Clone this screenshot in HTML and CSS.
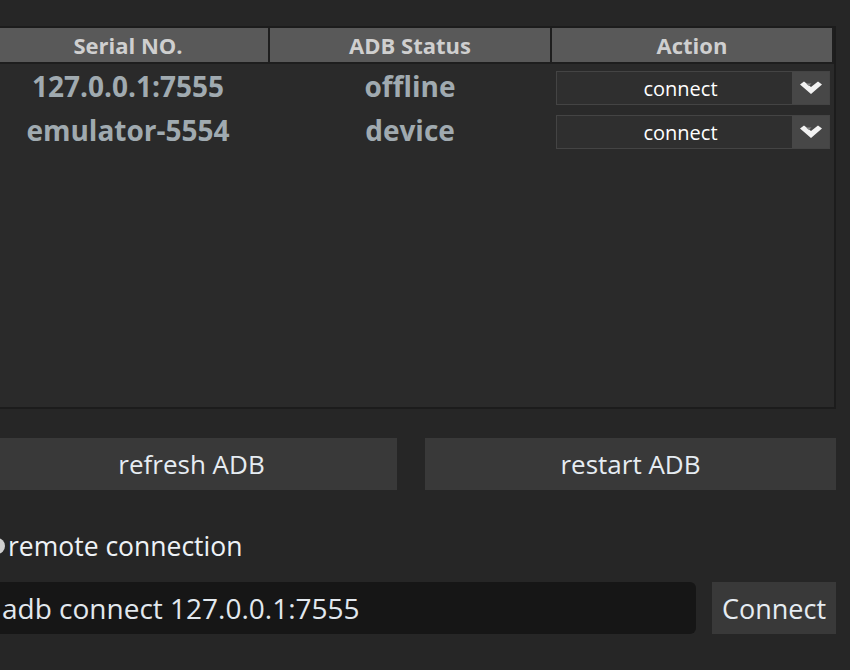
FILE: index.html
```html
<!DOCTYPE html>
<html lang="en">

<head>
    <meta charset="UTF-8">
    <meta name="viewport" content="width=device-width, initial-scale=1.0">
    <title>ADB Devices</title>
    <link rel="stylesheet" href="styles.css">
</head>

<body>
    <div class="adb">
        <div class="device_panel">
            <div class="device_head">
                <div>Serial NO.</div>
                <div>ADB Status</div>
                <div>Action</div>
            </div>
            <div class="device_row">
                <div class="serial">127.0.0.1:7555</div>
                <div class="status">offline</div>
                <div class="action">
                    <div class="combo">
                        <span>connect</span>
                        <i class="combo_arrow">
                            <svg width="24" height="14" viewBox="0 0 24 14">
                                <path d="M1 3.5 L5 0.5 L12 6 L19 0.5 L23 3.5 L12 13 Z" fill="#f2f2f2" />
                                <path d="M7 2.5 L12.5 2.5 L9.8 5 Z" fill="#8a8a8a" />
                            </svg>
                        </i>
                    </div>
                </div>
            </div>
            <div class="device_row">
                <div class="serial">emulator-5554</div>
                <div class="status">device</div>
                <div class="action">
                    <div class="combo">
                        <span>connect</span>
                        <i class="combo_arrow">
                            <svg width="24" height="14" viewBox="0 0 24 14">
                                <path d="M1 3.5 L5 0.5 L12 6 L19 0.5 L23 3.5 L12 13 Z" fill="#f2f2f2" />
                                <path d="M7 2.5 L12.5 2.5 L9.8 5 Z" fill="#8a8a8a" />
                            </svg>
                        </i>
                    </div>
                </div>
            </div>
        </div>

        <div class="adb_buttons">
            <button>refresh ADB</button>
            <button>restart ADB</button>
        </div>

        <label class="remote">
            <span class="radio"></span>
            remote connection
        </label>

        <div class="remote_form">
            <input class="remote_input" type="text" value="adb connect 127.0.0.1:7555">
            <button class="remote_btn">Connect</button>
        </div>
    </div>
</body>

</html>
```

FILE: styles.css
```css
* {
    box-sizing: border-box;
}

body {
    margin: 0;
    background: #262626;
    overflow: hidden;
    font-family: "Open Sans", "Noto Sans", sans-serif;
}

.adb {
    width: 850px;
    margin-left: -14px;
    padding-top: 26px;
}

.device_panel {
    height: 383px;
    background: #2a2a2a;
    border: 2px solid #1c1c1c;
}

.device_head {
    display: grid;
    grid-template-columns: 280px 280px 280px;
    column-gap: 2px;
    height: 36px;
    border-bottom: 2px solid #1e1e1e;
    background: #1e1e1e;
}

.device_head div {
    display: flex;
    align-items: center;
    justify-content: center;
    background: #595959;
    color: #cfcfcf;
    font-size: 22px;
    font-weight: bold;
}

.device_row {
    display: grid;
    grid-template-columns: 280px 280px 280px;
    column-gap: 2px;
    height: 44px;
}

.serial,
.status {
    display: flex;
    align-items: center;
    justify-content: center;
    color: #a0aab0;
    font-size: 28px;
    font-weight: bold;
}

.action {
    padding: 7px 2px 3px 4px;
}

.combo {
    display: flex;
    height: 34px;
    border: 1px solid #444;
    background: #2f2f2f;
    color: #fff;
    font-size: 20px;
}

.combo span {
    flex: 1;
    display: flex;
    align-items: center;
    justify-content: center;
    padding-left: 12px;
}

.combo_arrow {
    width: 37px;
    display: flex;
    align-items: center;
    justify-content: center;
    background: #474747;
}

.adb_buttons {
    display: flex;
    gap: 28px;
    margin-top: 29px;
}

.adb_buttons button,
.remote_btn {
    height: 52px;
    border: none;
    background: #393939;
    color: #e6ecf2;
    font-family: inherit;
    font-size: 26px;
}

.adb_buttons button {
    flex: 1;
}

.remote {
    display: flex;
    align-items: center;
    gap: 3px;
    height: 40px;
    margin-top: 36px;
    padding-left: 3px;
    color: #eef2f6;
    font-size: 26.5px;
}

.radio {
    width: 16px;
    height: 16px;
    border-radius: 50%;
    background: #cfcfcf;
}

.remote_form {
    display: flex;
    gap: 16px;
    margin-top: 16px;
}

.remote_input {
    flex: 1;
    height: 52px;
    padding: 0 0 0 16px;
    border: none;
    border-radius: 6px;
    background: #161616;
    color: #e2e8ee;
    font-family: inherit;
    font-size: 28px;
    outline: none;
}

.remote_btn {
    width: 124px;
    font-size: 27px;
}
```
